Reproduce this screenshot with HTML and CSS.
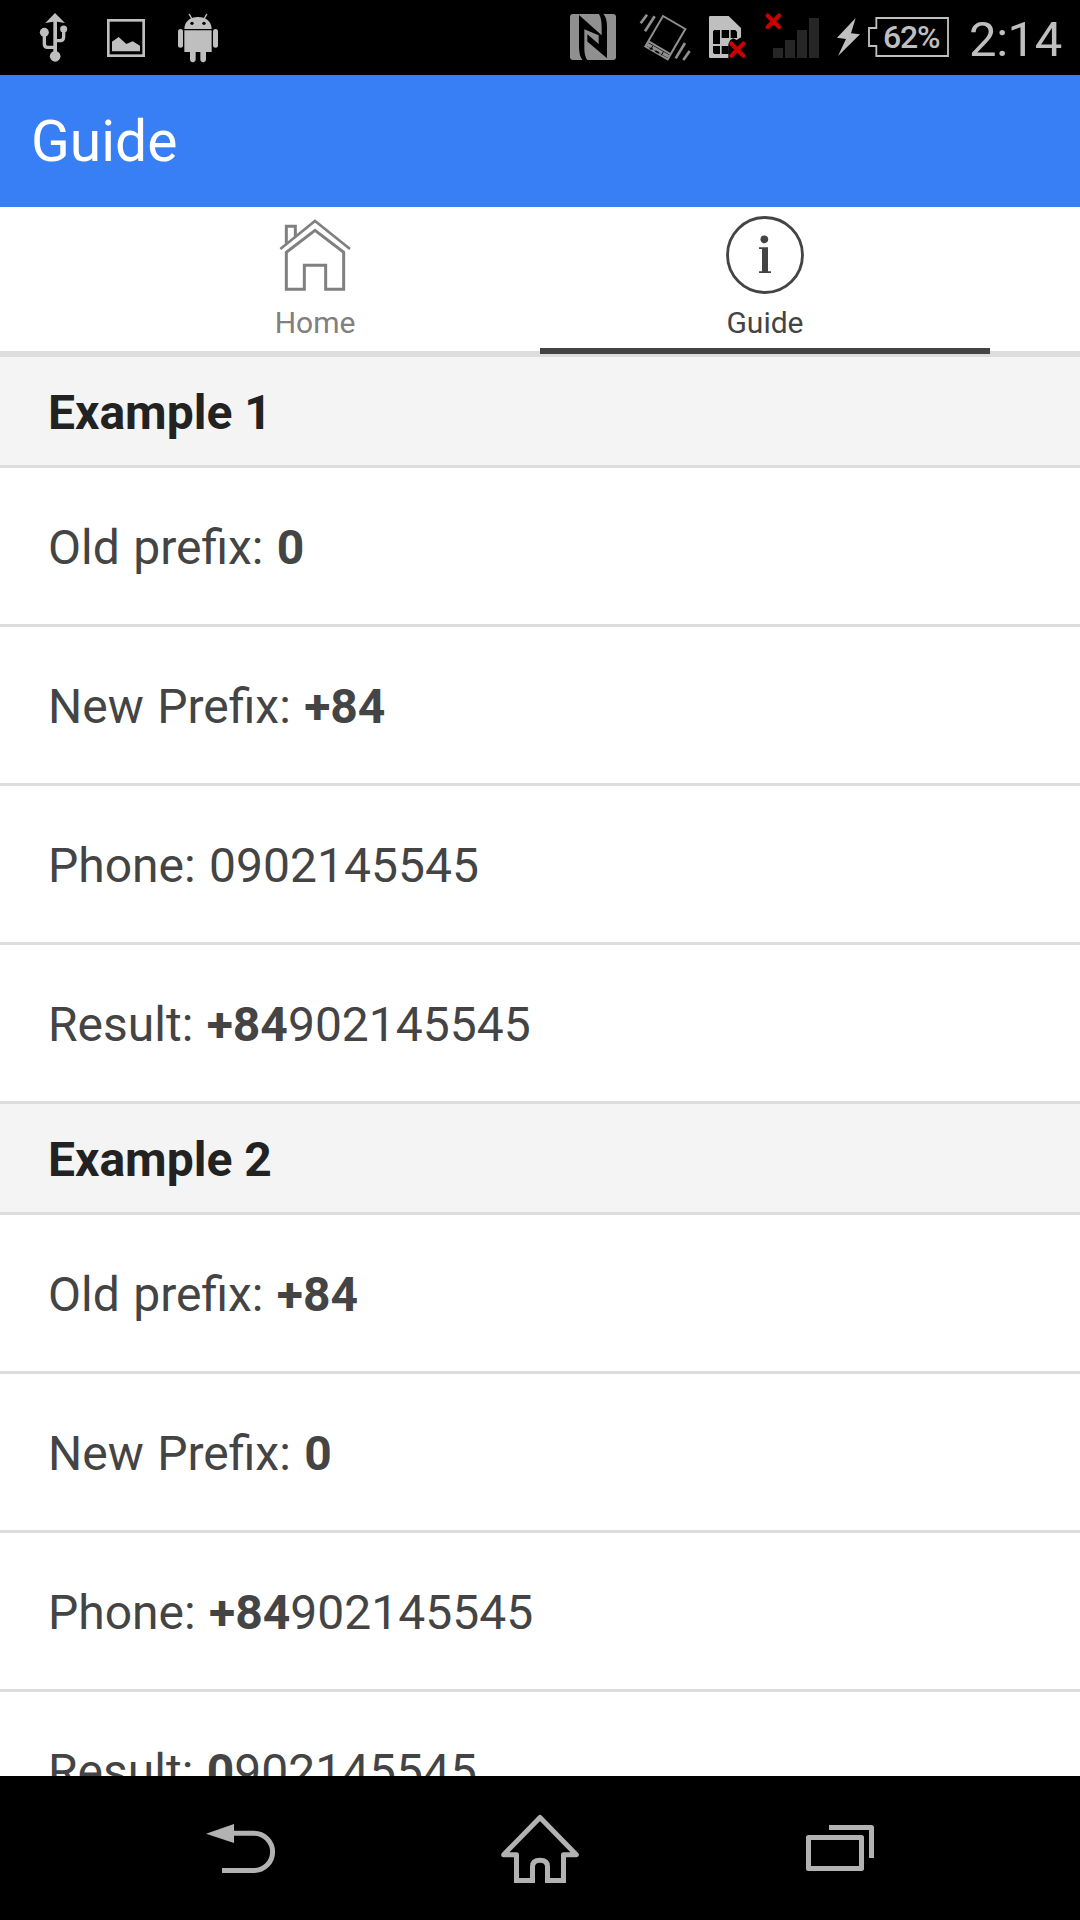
FILE: index.html
```html
<!DOCTYPE html>
<html lang="en">
<head>
<meta charset="utf-8">
<title>Guide</title>
<link rel="stylesheet" href="styles.css">
</head>
<body>
<div class="screen">
  <div class="status">
    <svg class="usb" width="30" height="75" viewBox="117 0 90 225" fill="#bfbfbf">
      <path d="M165 39L195 69L171 65V160H160V65L136 69Z"/>
      <circle cx="165.500" cy="169" r="16"/><circle cx="133" cy="97" r="13.500"/><circle cx="191" cy="87" r="10.500"/>
      <path d="M133 100V132Q133 142 143 142H162M191 90V110Q191 122 180 122H169" fill="none" stroke="#bfbfbf" stroke-width="10"/>
    </svg>
    <svg class="gallery" width="38" height="75" viewBox="321 0 114 225" fill="#bfbfbf">
      <rect x="325" y="61" width="106" height="106" fill="none" stroke="#bfbfbf" stroke-width="8"/>
      <path d="M336 154V125L356 111L379 132L398 124L420 137V154Z"/>
    </svg>
    <svg class="android" width="42" height="75" viewBox="531 0 126 225" fill="#bfbfbf">
      <path d="M553 87C553 65 570 51 594 51S635 65 635 87Z"/>
      <path d="M568 43L576 57M620 43L612 57" stroke="#bfbfbf" stroke-width="4" stroke-linecap="round"/>
      <circle cx="576" cy="70" r="5" fill="#000"/><circle cx="612" cy="70" r="5" fill="#000"/>
      <path d="M553 91H635V156H618V178A8.500 8.500 0 0 1 601 178V156H587V178A8.500 8.500 0 0 1 570 178V156H553Z"/>
      <rect x="534" y="87" width="15" height="56" rx="7.500"/><rect x="639" y="87" width="15" height="56" rx="7.500"/>
    </svg>
    <svg class="nfc" width="46" height="75" viewBox="60 0 138 225">
      <rect x="60" y="42" width="138" height="138" rx="9" fill="#909090"/>
      <path d="M87 45L155 106V82Q155 56 147 42H160Q171 52 171 82V175L103 117V145Q103 169 112 180H98Q87 169 87 140Z" fill="#000"/>
      <path d="M103 88V118L112 126V103L146 132V106Z" fill="#909090"/>
    </svg>
    <svg class="vibrate" width="52" height="75" viewBox="268 0 156 225" fill="none" stroke="#909090">
      <path d="M340 48L407 87L354 178L287 139Z" stroke-width="6"/>
      <path d="M297 124L362 162" stroke-width="6"/><path d="M293 133L356 169" stroke-width="10"/>
      <path d="M309 138L304 147M341 155L335 166" stroke="#000" stroke-width="3"/>
      <path d="M292 44L273 70M315 49L286 94M406 129L378 175M420 153L401 180" stroke-width="8"/>
      <path d="M300 145L309 147M317 153L328 159" stroke="#000" stroke-width="5"/>
    </svg>
    <svg class="sim" width="39" height="75" viewBox="474 0 117 225">
      <path d="M481 48H536L573 84V174H481Q477 174 477 170V52Q477 48 481 48Z" fill="#bfbfbf"/>
      <path d="M493 90H510V132H489V94ZM515 90H537V114H515ZM542 90H556L561 96V114H542ZM489 138H510V162H493L489 158Z" fill="#000"/>
      <path d="M515 138H536V162H515Z" fill="#000"/>
      <path d="M541 120L550 115L560 120L573 112V180H535V132Z" fill="#000"/>
      <path d="M544 131L580 167M580 131L544 167" stroke="#c80000" stroke-width="13" stroke-linecap="round"/>
    </svg>
    <svg class="signal" width="56" height="75" viewBox="642 0 168 225">
      <path d="M669 144H699V174H669ZM705 120H735V174H705ZM741 90H771V174H741ZM777 54H807V174H777Z" fill="#262626"/>
      <path d="M653 47L687 81M687 47L653 81" stroke="#c80000" stroke-width="13" stroke-linecap="round"/>
    </svg>
    <svg class="bolt" width="24" height="75" viewBox="108 0 72 225"><path d="M167 54L111 113L138 117L114 168L180 103L153 100Z" fill="#bfbfbf"/></svg>
    <div class="battery">
      <svg width="81" height="75" viewBox="204 0 243 225"><path d="M229 54H444V168H229V138H207V84H229Z" fill="none" stroke="#bfbfbf" stroke-width="5.500"/></svg>
      <span class="level">62%</span>
    </div>
    <span class="clock">2:14</span>
  </div>
  <header class="header"><h1 class="title">Guide</h1></header>
  <nav class="tabs">
    <a class="tab">
      <svg width="80" height="84" viewBox="105 36 240 252" fill="none" stroke="#808080" stroke-width="9">
        <path d="M121 147L225 63L330 147" stroke-width="8"/>
        <path d="M139 268V157L225 91L311 157V268H257V196H193V268Z"/>
        <path d="M139 132V79H166V110"/>
      </svg>
      <span class="label">Home</span>
    </a>
    <a class="tab active">
      <svg width="80" height="84" viewBox="135 36 240 252" fill="#444">
        <circle cx="255" cy="165" r="112.500" fill="none" stroke="#444" stroke-width="8.500"/>
        <circle cx="253" cy="118" r="11.500"/>
        <path d="M237 142H264V214H273V219H237V214H246V147H237Z"/>
      </svg>
      <span class="label">Guide</span>
    </a>
  </nav>
  <main class="list">
    <h2 class="divider">Example 1</h2>
    <p class="item">Old prefix: <b>0</b></p>
    <p class="item">New Prefix: <b>+84</b></p>
    <p class="item">Phone: 0902145545</p>
    <p class="item">Result: <b>+84</b>902145545</p>
    <h2 class="divider">Example 2</h2>
    <p class="item">Old prefix: <b>+84</b></p>
    <p class="item">New Prefix: <b>0</b></p>
    <p class="item">Phone: <b>+84</b>902145545</p>
    <p class="item">Result: <b>0</b>902145545</p>
  </main>
  <footer class="navbar">
    <svg width="80" height="144" viewBox="93 48 240 432">
      <path d="M108 221L192 192V249Z" fill="#b2b2b2"/>
      <path d="M190 220H252A55.500 55.500 0 0 1 252 331.500H156" fill="none" stroke="#b2b2b2" stroke-width="15"/>
    </svg>
    <svg width="80" height="144" viewBox="990 48 240 432" fill="none" stroke="#b2b2b2" stroke-width="15">
      <path d="M1110 172.500L1219 284H1180.500V361.500H1132.500V320Q1132.500 301 1110 301T1087.500 320V361.500H1039.500V284H1001Z" stroke-linejoin="round"/>
      <path d="M1032 354H1047V369H1032ZM1080 354H1095V369H1080ZM1125 354H1140V369H1125ZM1173 354H1188V369H1173Z" fill="#b2b2b2" stroke="none"/>
    </svg>
    <svg width="80" height="144" viewBox="60 48 240 432" fill="none" stroke="#b2b2b2" stroke-width="15" stroke-linejoin="round">
      <rect x="85.500" y="232.500" width="159" height="93"/>
      <path d="M147 202.500H274.500V294"/>
    </svg>
  </footer>
</div>
</body>
</html>
```
FILE: styles.css
```css
* { box-sizing: border-box; }
body { margin: 0; background: #fff; font-family: Roboto, "Noto Sans", sans-serif; color: #444; }
h1, h2, p { margin: 0; font-weight: 400; }
svg { display: block; flex: none; }
.screen { display: flex; flex-direction: column; width: 1080px; height: 1920px; overflow: hidden; }

.status { display: flex; flex: none; height: 75px; background: #000; color: #bfbfbf; }
.usb { margin-left: 39px; }
.gallery { margin-left: 38px; }
.android { margin-left: 32px; }
.nfc { margin-left: auto; }
.vibrate { margin-left: 23px; }
.sim { margin-left: 17px; }
.signal { margin-left: 17px; }
.bolt { margin-left: 16px; }
.battery { position: relative; margin-left: 8px; }
.level { position: absolute; left: 15px; top: 19px; font-size: 32px; line-height: 36px; font-weight: 500; letter-spacing: -1.2px; }
.clock { width: 131px; padding-left: 20px; font-size: 49px; line-height: 80px; letter-spacing: -0.4px; }

.header { display: flex; align-items: center; flex: none; height: 132px; padding: 2px 0 0 31px; background: #387ef5; color: #fff; }
.title { font-size: 57px; line-height: 70px; }

.tabs { display: flex; justify-content: center; flex: none; height: 150px; padding: 0 90px; border-bottom: 6px solid #ddd; }
.tab { display: flex; flex-direction: column; align-items: center; width: 450px; height: 147px; padding-top: 5px; color: #808080; }
.active { color: #444; border-bottom: 6px solid #444; }
.label { margin-top: 9px; font-size: 30px; line-height: 36px; }

.list { flex: 1; min-height: 0; overflow: hidden; font-size: 48px; }
.divider, .item { padding: 3px 48px 0; border-bottom: 3px solid #ddd; white-space: nowrap; font-size: 48px; }
.divider { height: 111px; line-height: 105px; background: #f4f4f4; color: #222; font-weight: 700; }
.item { height: 159px; line-height: 153px; word-spacing: 1.5px; }

.navbar { display: flex; flex: none; gap: 219px; height: 144px; padding-left: 201px; background: #000; }
.navbar svg:last-child { margin-left: 1px; }
```
